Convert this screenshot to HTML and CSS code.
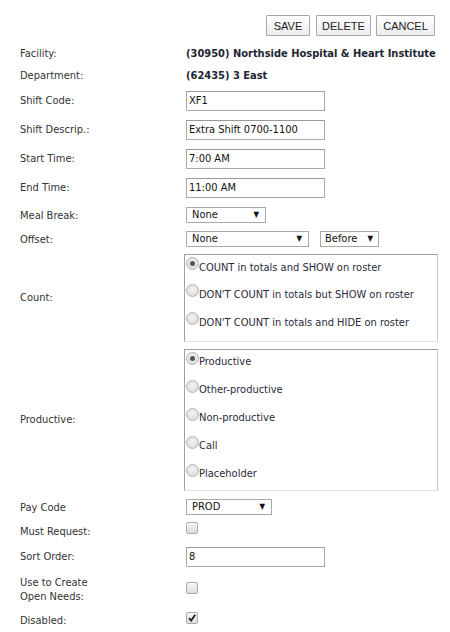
FILE: index.html
```html
<!DOCTYPE html>
<html>
<head>
<meta charset="utf-8">
<link rel="stylesheet" href="styles.css">
</head>
<body>
<div class="page">
  <div class="actions">
    <button class="btn save">SAVE</button>
    <button class="btn delete">DELETE</button>
    <button class="btn cancel">CANCEL</button>
  </div>
  <div class="form">
    <div class="row r-text"><div class="label">Facility:</div><div class="value strong">(30950) Northside Hospital &amp; Heart Institute</div></div>
    <div class="row r-text"><div class="label">Department:</div><div class="value strong">(62435) 3 East</div></div>
    <div class="row r-input"><div class="label">Shift Code:</div><div class="value"><div class="input">XF1</div></div></div>
    <div class="row r-input"><div class="label">Shift Descrip.:</div><div class="value"><div class="input">Extra Shift 0700-1100</div></div></div>
    <div class="row r-input"><div class="label">Start Time:</div><div class="value"><div class="input">7:00 AM</div></div></div>
    <div class="row r-input"><div class="label">End Time:</div><div class="value"><div class="input">11:00 AM</div></div></div>
    <div class="row r-meal"><div class="label">Meal Break:</div><div class="value"><div class="select w-meal"><span>None</span><span class="arrow">▼</span></div></div></div>
    <div class="row r-offset"><div class="label">Offset:</div><div class="value sel-pair"><div class="select w-offset"><span>None</span><span class="arrow">▼</span></div><div class="select w-before"><span>Before</span><span class="arrow">▼</span></div></div></div>
    <div class="row r-count"><div class="label">Count:</div><div class="value">
      <div class="group g-count">
        <div class="opt"><span class="radio on"></span><span class="opt-text">COUNT in totals and SHOW on roster</span></div>
        <div class="opt"><span class="radio"></span><span class="opt-text">DON'T COUNT in totals but SHOW on roster</span></div>
        <div class="opt"><span class="radio"></span><span class="opt-text">DON'T COUNT in totals and HIDE on roster</span></div>
      </div>
    </div></div>
    <div class="row r-prod"><div class="label">Productive:</div><div class="value">
      <div class="group g-prod">
        <div class="opt"><span class="radio on"></span><span class="opt-text">Productive</span></div>
        <div class="opt"><span class="radio"></span><span class="opt-text">Other-productive</span></div>
        <div class="opt"><span class="radio"></span><span class="opt-text">Non-productive</span></div>
        <div class="opt"><span class="radio"></span><span class="opt-text">Call</span></div>
        <div class="opt"><span class="radio"></span><span class="opt-text">Placeholder</span></div>
      </div>
    </div></div>
    <div class="row r-pay"><div class="label">Pay Code</div><div class="value"><div class="select w-pay"><span>PROD</span><span class="arrow">▼</span></div></div></div>
    <div class="row r-check"><div class="label">Must Request:</div><div class="value"><span class="check"></span></div></div>
    <div class="row r-input"><div class="label">Sort Order:</div><div class="value"><div class="input">8</div></div></div>
    <div class="row r-open"><div class="label two">Use to Create<br>Open Needs:</div><div class="value"><span class="check"></span></div></div>
    <div class="row r-dis"><div class="label lower">Disabled:</div><div class="value"><span class="check on"><svg viewBox="0 0 10 10" width="10" height="10"><path d="M2 5.2 L4.2 7.6 L8.2 1.8" fill="none" stroke="#222" stroke-width="1.8"/></svg></span></div></div>
  </div>
</div>
</body>
</html>
```
FILE: styles.css
```css
html, body {
  margin: 0;
  padding: 0;
  background: #fff;
}
body {
  font-family: "DejaVu Sans Condensed", "DejaVu Sans", sans-serif;
  font-stretch: condensed;
  font-size: 11px;
  color: #333;
}
.page {
  width: 450px;
  padding-top: 15px;
}
.actions {
  display: flex;
  justify-content: flex-end;
  padding-right: 15px;
  height: 21px;
  margin-bottom: 6px;
}
.btn {
  font-family: "Liberation Sans", Arial, sans-serif;
  font-stretch: normal;
  font-size: 11px;
  color: #222;
  height: 21px;
  padding: 0;
  border: 1px solid #a8a8a8;
  border-radius: 1px;
  background: linear-gradient(#ffffff, #ececec);
}
.save { width: 44px; margin-right: 6px; }
.delete { width: 55px; margin-right: 5px; }
.cancel { width: 59px; }

.form {
  padding-left: 20px;
}
.row {
  display: flex;
  align-items: center;
}
.label {
  width: 166px;
  flex: none;
  color: #333;
}
.value {
  display: flex;
  align-items: center;
}
.strong {
  font-weight: bold;
  color: #1e2533;
}
.r-text { height: 22px; }
.r-input { height: 29px; }
.r-meal { height: 26px; }
.r-offset { height: 22px; }
.r-count { height: 95px; }
.r-prod { height: 149px; }
.r-pay { height: 26px; }
.r-check { height: 22px; }
.r-open { height: 35px; }
.r-dis { height: 27px; }

.input {
  box-sizing: border-box;
  width: 139px;
  height: 20px;
  border: 1px solid #a9a9a9;
  border-top-color: #999;
  padding: 0 2px;
  line-height: 18px;
  color: #111;
}
.select {
  box-sizing: border-box;
  height: 16px;
  border: 1px solid #a9a9a9;
  padding: 0 6px 0 5px;
  display: flex;
  align-items: center;
  justify-content: space-between;
  color: #111;
  line-height: 14px;
}
.arrow {
  font-family: "DejaVu Sans", sans-serif;
  font-size: 8px;
  color: #111;
}
.w-meal { width: 80px; }
.w-offset { width: 123px; }
.w-before { width: 59px; padding-left: 4px; padding-right: 5px; }
.w-pay { width: 86px; }
.sel-pair { gap: 11px; }

.group {
  box-sizing: border-box;
  width: 254px;
  margin-left: -2px;
  border: 1px solid #a0a0a0;
  border-right-color: #c8c8c8;
  border-bottom-color: #e2e2e2;
  padding: 1px 0 0 1px;
}
.g-count { height: 88px; }
.g-prod { height: 142px; }
.opt {
  display: flex;
  align-items: flex-start;
  height: 28px;
}
.g-count .opt { height: 27.5px; }
.radio {
  box-sizing: border-box;
  width: 13px;
  height: 13px;
  border-radius: 50%;
  border: 1px solid #b4b4b4;
  background: radial-gradient(circle at 50% 40%, #f4f4f4, #d4d4d4);
  margin-top: 1px;
  flex: none;
  position: relative;
}
.radio.on::after {
  content: "";
  position: absolute;
  left: 3px;
  top: 3px;
  width: 5px;
  height: 5px;
  border-radius: 50%;
  background: #555;
}
.opt-text {
  margin-top: 5px;
  line-height: 13px;
  color: #2a2a3a;
}
.g-prod .opt-text { margin-top: 4px; }
.check {
  box-sizing: border-box;
  display: inline-flex;
  align-items: center;
  justify-content: center;
  width: 12px;
  height: 12px;
  border: 1px solid #aaa;
  border-radius: 2px;
  background: linear-gradient(#f6f6f6, #dcdcdc);
}
.r-check .check { margin-top: -6px; }
.r-open .check { margin-top: -1px; }
.r-dis .check { margin-top: -4px; }
.lower { padding-top: 2px; }
.two { line-height: 14px; padding-top: 3px; }
```
